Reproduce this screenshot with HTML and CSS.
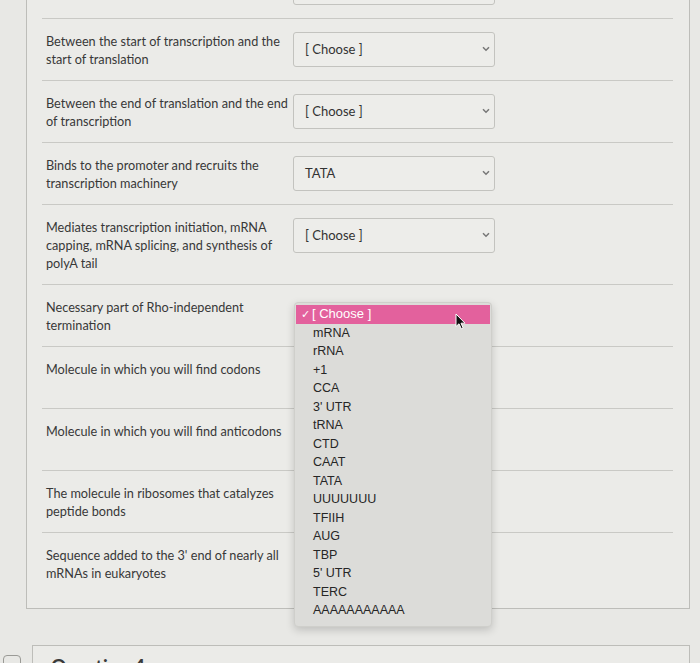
FILE: index.html
```html
<!DOCTYPE html>
<html>
<head>
<meta charset="utf-8">
<link rel="stylesheet" href="styles.css">
</head>
<body>
<div class="page">
  <div class="question">
    <div class="flag-col"></div>
    <div class="card card-first">
      <div class="row row-first">
        <div class="label"></div>
        <div class="sel"><span class="sel-text"></span><svg class="chev" width="8" height="6" viewBox="0 0 8 6"><path d="M1 1.2 L4 4.2 L7 1.2" fill="none" stroke="#777" stroke-width="1.5"/></svg></div>
      </div>
      <div class="row">
        <div class="label">Between the start of transcription and the start of translation</div>
        <div class="sel"><span class="sel-text">[ Choose ]</span><svg class="chev" width="8" height="6" viewBox="0 0 8 6"><path d="M1 1.2 L4 4.2 L7 1.2" fill="none" stroke="#777" stroke-width="1.5"/></svg></div>
      </div>
      <div class="row">
        <div class="label">Between the end of translation and the end of transcription</div>
        <div class="sel"><span class="sel-text">[ Choose ]</span><svg class="chev" width="8" height="6" viewBox="0 0 8 6"><path d="M1 1.2 L4 4.2 L7 1.2" fill="none" stroke="#777" stroke-width="1.5"/></svg></div>
      </div>
      <div class="row">
        <div class="label">Binds to the promoter and recruits the transcription machinery</div>
        <div class="sel"><span class="sel-text">TATA</span><svg class="chev" width="8" height="6" viewBox="0 0 8 6"><path d="M1 1.2 L4 4.2 L7 1.2" fill="none" stroke="#777" stroke-width="1.5"/></svg></div>
      </div>
      <div class="row">
        <div class="label">Mediates transcription initiation, mRNA capping, mRNA splicing, and synthesis of polyA tail</div>
        <div class="sel"><span class="sel-text">[ Choose ]</span><svg class="chev" width="8" height="6" viewBox="0 0 8 6"><path d="M1 1.2 L4 4.2 L7 1.2" fill="none" stroke="#777" stroke-width="1.5"/></svg></div>
      </div>
      <div class="row">
        <div class="label">Necessary part of Rho-independent termination</div>
        <div class="sel-wrap">
          <div class="sel sel-hidden"></div>
          <div class="menu">
            <div class="item active"><span class="check">✓</span>[ Choose ]</div>
            <div class="item">mRNA</div>
            <div class="item">rRNA</div>
            <div class="item">+1</div>
            <div class="item">CCA</div>
            <div class="item">3' UTR</div>
            <div class="item">tRNA</div>
            <div class="item">CTD</div>
            <div class="item">CAAT</div>
            <div class="item">TATA</div>
            <div class="item">UUUUUUU</div>
            <div class="item">TFIIH</div>
            <div class="item">AUG</div>
            <div class="item">TBP</div>
            <div class="item">5' UTR</div>
            <div class="item">TERC</div>
            <div class="item">AAAAAAAAAAA</div>
            <svg class="cursor" width="12" height="17" viewBox="0 0 12 17"><path d="M1 1 L1 13.5 L4 10.8 L6.3 15.8 L8.2 15 L6 10.2 L10 10.2 Z" fill="#111" stroke="#fff" stroke-width="1"/></svg>
          </div>
        </div>
      </div>
      <div class="row">
        <div class="label">Molecule in which you will find codons</div>
        <div class="sel sel-hidden"></div>
      </div>
      <div class="row">
        <div class="label">Molecule in which you will find anticodons</div>
        <div class="sel sel-hidden"></div>
      </div>
      <div class="row">
        <div class="label">The molecule in ribosomes that catalyzes peptide bonds</div>
        <div class="sel sel-hidden"></div>
      </div>
      <div class="row">
        <div class="label">Sequence added to the 3' end of nearly all mRNAs in eukaryotes</div>
        <div class="sel sel-hidden"></div>
      </div>
    </div>
  </div>
  <div class="question question-next">
    <div class="flag-col"><div class="flag"></div></div>
    <div class="card card-next">
      <div class="q-title">Question 4</div>
    </div>
  </div>
</div>
</body>
</html>
```

FILE: styles.css
```css
html, body {
  margin: 0;
  padding: 0;
  background: #e8e8e5;
  overflow: hidden;
}
body {
  width: 700px;
  height: 663px;
  font-family: Lato, "Open Sans", sans-serif;
  color: #383838;
}
.page {
  padding-left: 3px;
}
.question {
  display: flex;
}
.flag-col {
  width: 20px;
  flex: none;
}
.card {
  width: 664px;
  margin-left: 3px;
  border: 1px solid #bdbdb9;
  background: #ebebe8;
  box-sizing: border-box;
  padding: 0 16px 14px 15px;
}
.card-first {
  margin-top: -43px;
  border-top: none;
}
.row {
  display: flex;
  align-items: flex-start;
  padding: 13px 0 12px;
  border-top: 1px solid #c9c9c5;
}
.row-first {
  border-top: none;
}
.label {
  width: 251px;
  flex: none;
  box-sizing: border-box;
  padding-left: 4px;
  padding-right: 0;
  font-size: 12.7px;
  line-height: 18px;
  min-height: 36px;
}
.sel-wrap {
  position: relative;
}
.sel {
  width: 202px;
  height: 35px;
  box-sizing: border-box;
  border: 1px solid #c3c3bf;
  border-radius: 3px;
  background: #ededea;
  display: flex;
  align-items: center;
  justify-content: space-between;
  padding: 0 4px 1px 11px;
  font-size: 13px;
  color: #333;
}
.sel-hidden {
  visibility: hidden;
}
.chev {
  display: block;
}
.menu {
  position: absolute;
  top: 4px;
  left: 1px;
  width: 198px;
  box-sizing: border-box;
  background: #dcdcd9;
  border: 1px solid #cfcfcb;
  border-radius: 4px;
  box-shadow: 0 3px 8px rgba(0,0,0,0.18);
  padding: 2px 0 6px;
  font-family: "Liberation Sans", Arial, sans-serif;
  font-size: 12.5px;
  color: #262626;
}
.item {
  height: 18.5px;
  line-height: 18.5px;
  padding-left: 18px;
  position: relative;
}
.item.active {
  background: #e3619d;
  color: #fff;
  padding-left: 14px;
  margin: 0 1px;
  font-size: 13px;
}
.check {
  font-size: 11px;
  margin-right: 2px;
  margin-left: -9px;
}
.cursor {
  position: absolute;
  left: 160px;
  top: 10px;
}
.question-next {
  margin-top: 36px;
}
.flag {
  width: 18px;
  height: 20px;
  margin-top: 10px;
  box-sizing: border-box;
  border: 1.5px solid #9a9a96;
  border-radius: 4px;
}
.card-next {
  margin-left: 9px;
  width: 658px;
  height: 40px;
  padding: 8px 18px;
  border-bottom: none;
}
.q-title {
  font-size: 19px;
  font-weight: 700;
  color: #3a3a3a;
}
```
